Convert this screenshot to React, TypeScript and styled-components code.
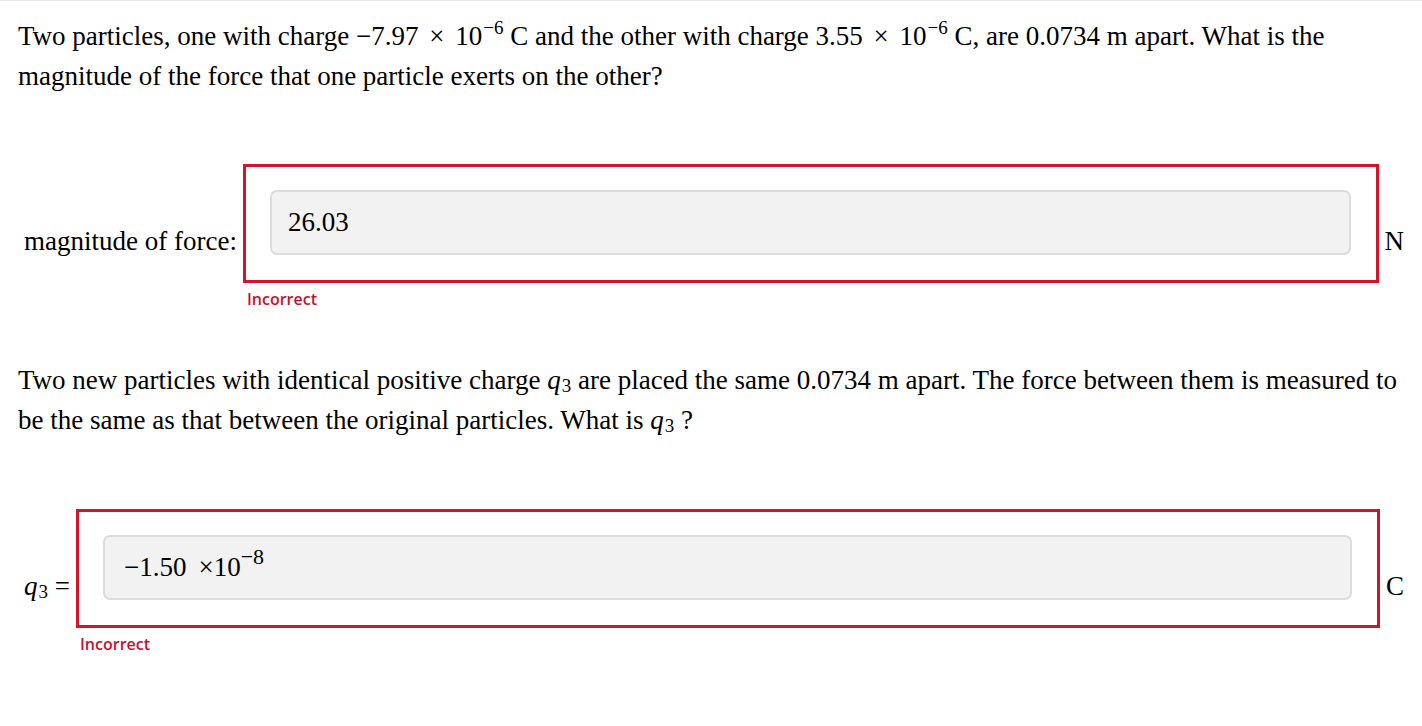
import React from "react";
import styled, { createGlobalStyle } from "styled-components";

const GlobalStyle = createGlobalStyle`
  html, body {
    margin: 0;
    padding: 0;
    background: #fff;
  }
  body {
    font-family: "Liberation Serif", "Times New Roman", serif;
    color: #000;
  }
`;

const Page = styled.div`
  border-top: 1px solid #e6e6e6;
  padding: 15px 18px 40px 18px;
`;

const Prompt = styled.p`
  margin: 0;
  font-size: 27px;
  line-height: 40px;
`;

const Op = styled.span`
  margin: 0 4px;
`;

const Sup = styled.span`
  display: inline-block;
  font-size: 19px;
  line-height: 19px;
  vertical-align: 11px;
  margin-left: 1px;
`;

const MathVar = styled.span`
  font-style: italic;
  white-space: nowrap;
`;

const Sub = styled.span`
  display: inline-block;
  font-style: normal;
  font-size: 19px;
  line-height: 19px;
  vertical-align: -3px;
  margin-left: 1px;
`;

const AnswerRow = styled.div<{ $top: number; $bottom: number }>`
  display: flex;
  align-items: center;
  gap: 6px;
  padding-left: 6px;
  margin-top: ${(p) => p.$top}px;
  margin-bottom: ${(p) => p.$bottom}px;
  font-size: 27px;
`;

const Label = styled.span`
  white-space: nowrap;
  line-height: 30px;
`;

const Unit = styled.span`
  line-height: 30px;
`;

const Field = styled.div`
  flex: 1;
  display: flex;
  flex-direction: column;
`;

const WrongBox = styled.div`
  border: 3px solid #d0142a;
  padding: 23px 25px 25px 24px;
`;

const Input = styled.div`
  height: 61px;
  box-sizing: content-box;
  background: #f2f2f2;
  border: 2px solid #dcdcdc;
  border-radius: 7px;
  display: flex;
  align-items: center;
  padding: 0 16px;
  font-size: 27px;
`;

const Value = styled.span<{ $indent?: number }>`
  padding-left: ${(p) => p.$indent ?? 0}px;
  white-space: nowrap;
`;

const Feedback = styled.div`
  margin-top: 4px;
  padding: 0 0 6px 4px;
  font-family: "Open Sans", "Liberation Sans", sans-serif;
  font-size: 16px;
  font-weight: 600;
  line-height: 24px;
  color: #c8102e;
`;

const Times = styled.span`
  margin-left: 12px;
`;

const InputSup = styled.span`
  font-size: 22px;
  position: relative;
  top: -12px;
`;

export default function App() {
  return (
    <>
      <GlobalStyle />
      <Page>
        <Prompt>
          Two particles, one with charge −7.97<Op> × </Op>10<Sup>−6</Sup> C and the other with
          charge 3.55<Op> × </Op>10<Sup>−6</Sup> C, are 0.0734 m apart. What is the magnitude of
          the force that one particle exerts on the other?
        </Prompt>

        <AnswerRow $top={68} $bottom={43}>
          <Label>magnitude of force:</Label>
          <Field>
            <WrongBox>
              <Input>
                <Value>26.03</Value>
              </Input>
            </WrongBox>
            <Feedback>Incorrect</Feedback>
          </Field>
          <Unit>N</Unit>
        </AnswerRow>

        <Prompt>
          Two new particles with identical positive charge{" "}
          <MathVar>
            q<Sub>3</Sub>
          </MathVar>{" "}
          are placed the same 0.0734 m apart. The force between them is measured to be the
          same as that between the original particles. What is{" "}
          <MathVar>
            q<Sub>3</Sub>
          </MathVar>{" "}
          ?
        </Prompt>

        <AnswerRow $top={69} $bottom={0}>
          <Label>
            <MathVar>
              q<Sub>3</Sub>
            </MathVar>{" "}
            =
          </Label>
          <Field>
            <WrongBox>
              <Input>
                <Value $indent={3}>
                  −1.50<Times>×10</Times>
                  <InputSup>−8</InputSup>
                </Value>
              </Input>
            </WrongBox>
            <Feedback>Incorrect</Feedback>
          </Field>
          <Unit>C</Unit>
        </AnswerRow>
      </Page>
    </>
  );
}
